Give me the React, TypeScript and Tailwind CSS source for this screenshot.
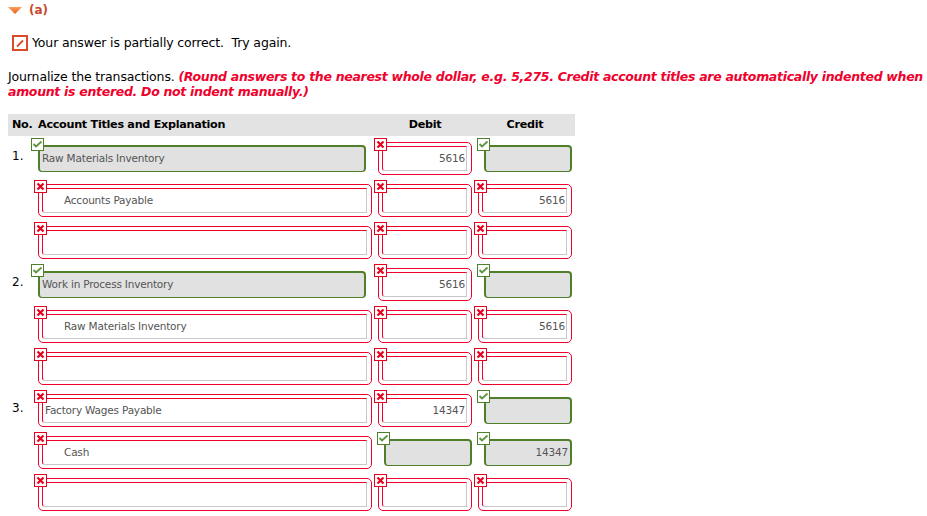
const xIcon = (
  <svg viewBox="0 0 11 11" className="w-[11px] h-[11px]">
    <path d="M2.5 2.5l6 6M8.5 2.5l-6 6" stroke="#e8001f" strokeWidth="2.2" fill="none" />
  </svg>
)

const checkIcon = (
  <svg viewBox="0 0 11 11" className="w-[11px] h-[11px]">
    <path d="M1.5 5l2.5 2.5 5.5-5" stroke="#5d9440" strokeWidth="1.8" fill="none" />
  </svg>
)

function WrongBadge() {
  return (
    <span className="absolute -left-[5px] -top-[5px] w-[13px] h-[13px] bg-white border border-[#e8001f] flex items-center justify-center">
      {xIcon}
    </span>
  )
}

function RightBadge() {
  return (
    <span className="absolute -left-[7px] -top-[7px] w-[13px] h-[13px] bg-white border border-[#4f7f2a] flex items-center justify-center">
      {checkIcon}
    </span>
  )
}

type Cell = { ok?: boolean; text?: string; indent?: boolean }

function Field({ cell, align, width }: { cell: Cell; align: 'left' | 'right'; width: string }) {
  const indentCls = cell.indent ? 'pl-[21px]' : ''

  if (cell.ok) {
    const alignCls = align === 'right' ? 'justify-end pr-[2px]' : 'justify-start pl-[2px]'
    return (
      <div className={`relative mt-[3px] h-[27px] ${width} ${align === 'right' ? 'ml-auto' : ''}`}>
        <div className={`h-full flex items-center bg-[#e1e1e1] rounded-[4px] border-t-2 border-l-2 border-r-2 border-b border-[#4f7f2a] text-[10.5px] tracking-[-0.2px] text-[#555] ${alignCls} ${indentCls}`}>
          {cell.text}
        </div>
        <RightBadge />
      </div>
    )
  }
  const alignCls = align === 'right' ? 'justify-end pr-[1px]' : 'justify-start pl-[2px]'
  return (
    <div className="relative h-[33px] border border-[#f0002c] rounded-[5px] bg-white pt-[3px] pl-[3px] pr-[4px] pb-[3px]">
      <div className={`h-full flex items-center bg-white border-t border-l border-t-[#f0002c] border-l-[#f0002c] border-r border-b border-r-[#c8c8c8] border-b-[#c8c8c8] rounded-bl-[3px] text-[10.5px] tracking-[-0.2px] text-[#555] ${alignCls} ${indentCls}`}>
        {cell.text}
      </div>
      <WrongBadge />
    </div>
  )
}

const rows: { no?: string; account: Cell; debit: Cell; credit: Cell }[] = [
  { no: '1.', account: { ok: true, text: 'Raw Materials Inventory' }, debit: { text: '5616' }, credit: { ok: true } },
  { account: { text: 'Accounts Payable', indent: true }, debit: {}, credit: { text: '5616' } },
  { account: {}, debit: {}, credit: {} },
  { no: '2.', account: { ok: true, text: 'Work in Process Inventory' }, debit: { text: '5616' }, credit: { ok: true } },
  { account: { text: 'Raw Materials Inventory', indent: true }, debit: {}, credit: { text: '5616' } },
  { account: {}, debit: {}, credit: {} },
  { no: '3.', account: { text: 'Factory Wages Payable' }, debit: { text: '14347' }, credit: { ok: true } },
  { account: { text: 'Cash', indent: true }, debit: { ok: true }, credit: { ok: true, text: '14347' } },
  { account: {}, debit: {}, credit: {} },
]

export default function App() {
  return (
    <div className="w-[927px] h-[516px] overflow-hidden bg-white text-black font-['DejaVu_Sans',Verdana,sans-serif]">
      <div className="h-[20px] pl-[8px] flex items-center gap-[7px]">
        <svg viewBox="0 0 14 7" className="w-[14px] h-[7px]">
          <defs>
            <linearGradient id="tri" x1="0" y1="0" x2="0" y2="1">
              <stop offset="0" stopColor="#f9a15a" />
              <stop offset="1" stopColor="#ee5a1c" />
            </linearGradient>
          </defs>
          <path d="M0 0h14L7 7z" fill="url(#tri)" />
        </svg>
        <span className="text-[12px] font-bold text-[#c8492c]">(a)</span>
      </div>

      <div className="mt-[15px] h-[16px] pl-[12px] flex items-center gap-[4px] text-[12.5px] tracking-[-0.14px]">
        <span className="w-[16px] h-[16px] border-2 border-[#dc4a2c] flex items-center justify-center">
          <svg viewBox="0 0 12 12" className="w-[12px] h-[12px]">
            <path d="M3 9.5L9 3.5" stroke="#dc4a2c" strokeWidth="1.8" fill="none" />
          </svg>
        </span>
        <span className="whitespace-pre">Your answer is partially correct.  Try again.</span>
      </div>

      <p className="mt-[18px] pl-[8px] w-[927px] text-[12.5px] leading-[15px] tracking-[-0.14px]">
        Journalize the transactions.{' '}
        <b className="italic text-[#f0002c] tracking-[-0.3px]">
          (Round answers to the nearest whole dollar, e.g. 5,275. Credit account titles are automatically indented when amount is entered. Do not indent manually.)
        </b>
      </p>

      <div className="ml-[8px] mt-[15px] w-[567px]">
        <div className="h-[22px] bg-[#e3e3e3] grid grid-cols-[30px_334px_6px_94px_6px_94px_3px] items-center text-[11.2px] tracking-[-0.28px] font-bold">
          <span className="pl-[4px]">No.</span>
          <span>Account Titles and Explanation</span>
          <span />
          <span className="text-center">Debit</span>
          <span />
          <span className="text-center">Credit</span>
        </div>
        <div className="mt-[6px]">
          {rows.map((row, i) => (
            <div key={i} className="h-[42px] grid grid-cols-[30px_334px_6px_94px_6px_94px] items-start">
              <span className="pl-[4px] pt-[7px] text-[12px] leading-[15px]">{row.no}</span>
              <Field cell={row.account} align="left" width="w-[328px]" />
              <span />
              <Field cell={row.debit} align="right" width="w-[88px]" />
              <span />
              <Field cell={row.credit} align="right" width="w-[88px]" />
            </div>
          ))}
        </div>
      </div>
    </div>
  )
}
